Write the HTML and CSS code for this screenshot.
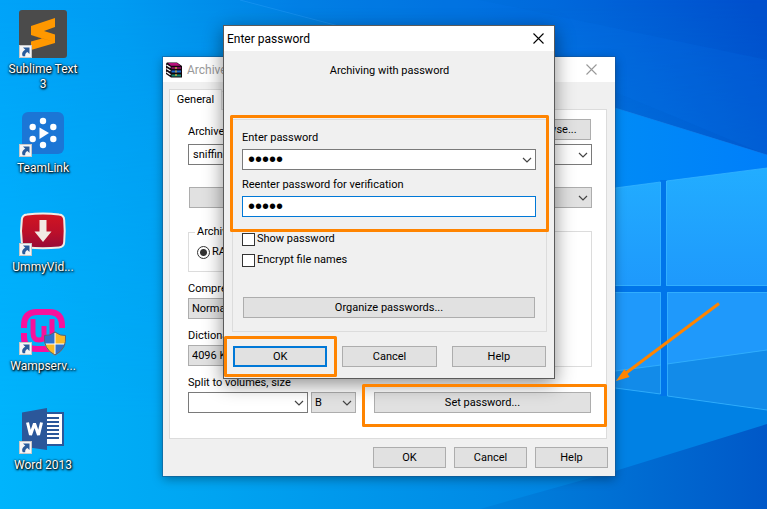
FILE: index.html
```html
<!DOCTYPE html>
<html lang="en">
<head>
<meta charset="utf-8">
<meta name="viewport" content="width=device-width, initial-scale=1">
<title>Enter password</title>
<link rel="stylesheet" href="styles.css">
</head>
<body>
<svg class="defs" width="0" height="0" aria-hidden="true">
  <symbol id="chevron" viewBox="0 0 10 6"><path d="M1 1l4 4 4-4" fill="none" stroke="#444" stroke-width="1.2"/></symbol>
  <symbol id="close" viewBox="0 0 11 11"><path d="M.5.5l10 10M10.5.5l-10 10" fill="none" stroke="currentColor" stroke-width="1.1"/></symbol>
  <symbol id="shortcut" viewBox="0 0 13 13">
    <rect x=".5" y=".5" width="12" height="12" fill="#f6f6f6" stroke="#c9c9c9"/>
    <path d="M4 2.5h6.5V9L8.400 6.900C6.600 8 6 9 6.200 11.200H3.800C2.400 8.600 3.500 6.200 6.300 4.800z" fill="#2a5c9c"/>
  </symbol>
</svg>

<main class="desktop">
  <svg class="wallpaper" viewBox="0 0 767 509" preserveAspectRatio="xMidYMid slice" aria-hidden="true">
    <defs>
      <linearGradient id="sky" x1="0" y1=".3" x2="1" y2=".1">
        <stop offset="0" stop-color="#00a6fb"/><stop offset=".2" stop-color="#009cf2"/><stop offset=".45" stop-color="#007fe2"/><stop offset=".75" stop-color="#0069dc"/><stop offset="1" stop-color="#0050cd"/>
      </linearGradient>
      <linearGradient id="floor" x1="0" y1="0" x2="1" y2="0">
        <stop offset="0" stop-color="#00b4fc"/><stop offset=".25" stop-color="#00a6f2"/><stop offset=".8" stop-color="#007fe0"/><stop offset="1" stop-color="#0066d2"/>
      </linearGradient>
      <linearGradient id="fade" x1="0" y1="0" x2="0" y2="1">
        <stop offset="0" stop-color="#fff" stop-opacity="0"/><stop offset=".85" stop-color="#fff"/>
      </linearGradient>
      <mask id="low"><rect width="767" height="509" fill="url(#fade)"/></mask>
      <linearGradient id="pane" x1="0" y1="0" x2="0" y2="1"><stop offset="0" stop-color="#22adff"/><stop offset="1" stop-color="#1e99fc"/></linearGradient>
      <linearGradient id="beam" x1="0" y1="0" x2="1" y2="0"><stop offset="0" stop-color="#008ff5"/><stop offset="1" stop-color="#007ffa"/></linearGradient>
      <linearGradient id="corner" x1="0" y1="0" x2="1" y2="0"><stop offset="0" stop-color="#0084de"/><stop offset="1" stop-color="#0058c8"/></linearGradient>
    </defs>
    <rect width="767" height="509" fill="url(#sky)"/>
    <rect width="767" height="509" fill="url(#floor)" mask="url(#low)"/>
    <path d="M240 0L335 25L500 72L615 92L767 155V60L480 0z" fill="#0a7cf0" opacity=".15"/>
    <path d="M240 0L335 25L615 108L767 155" fill="none" stroke="#3aa8ff" opacity=".3"/>
    <path d="M560 92L615 108L767 155V290H560z" fill="url(#beam)"/>
    <path d="M560 286H767V430L615 474H560z" fill="#0081e4"/>
    <path d="M480 509L615 471L767 424V509z" fill="url(#corner)"/>
    <path d="M600 284H767V293H600zM660 180H667V396H660z" fill="#0075ea"/>
    <path d="M600 190L661 182V286H600zM666 181L767 168V286H666z" fill="url(#pane)"/>
    <path d="M600 292H661V394L600 386zM667 292H767V410L667 396z" fill="#1f99fb"/>
    <path d="M600 373L661 365V394L600 386zM667 364L767 350V410L667 396z" fill="#128be9"/>
    <path d="M600 190L660.500 182V285.500H600M767 168L666.500 181V285.500H767M600 292.500H660.500V394L600 386M767 292.500H667.500V396L767 410M600 373L661 365M667 364L767 350" fill="none" stroke="#38b6ff" opacity=".75"/>
  </svg>

  <nav class="shortcuts" aria-label="Desktop">
    <a class="shortcut" href="#sublime">
      <svg class="glyph" viewBox="0 0 48 48" aria-hidden="true">
        <rect width="48" height="48" rx="3" fill="#4b4b4b"/>
        <path d="M12 16L36 8V17L25 21L36 24.500V33L12 40V31.500L23 28.500L12 25z" fill="#ff9800"/>
        <path d="M12 25L36 32L23 28.500z" fill="#d87c00"/>
        <use href="#shortcut" y="35" width="13" height="13"/>
      </svg>
      <span>Sublime Text 3</span>
    </a>
    <a class="shortcut" href="#teamlink">
      <svg class="glyph" viewBox="0 0 48 48" aria-hidden="true">
        <rect x="3" y="3" width="42" height="42" rx="6" fill="#1b76d6"/>
        <g fill="#fff"><circle cx="24" cy="12" r="3.200"/><circle cx="34.300" cy="18" r="3.200"/><circle cx="34.300" cy="30" r="3.200"/><circle cx="24" cy="36" r="3.200"/><circle cx="13.700" cy="30" r="3.200"/><circle cx="13.700" cy="18" r="3.200"/><path d="M20.500 18.500L30 24L20.500 30z"/></g>
        <use href="#shortcut" y="35" width="13" height="13"/>
      </svg>
      <span>TeamLink</span>
    </a>
    <a class="shortcut" href="#ummy">
      <svg class="glyph" viewBox="0 0 48 48" aria-hidden="true">
        <defs><linearGradient id="ruby" x1="0" y1="0" x2="0" y2="1"><stop offset="0" stop-color="#d21522"/><stop offset=".55" stop-color="#bb0f2a"/><stop offset="1" stop-color="#960c38"/></linearGradient></defs>
        <path d="M8 6.500Q24 4.500 40 6.500Q45 7 45.200 12Q46.200 23 45.200 34Q45 39 40 39.500Q24 41 8 39.500Q3 39 2.800 34Q1.200 23 2.800 12Q3 7 8 6.500z" fill="url(#ruby)" stroke="#f1ece6" stroke-width="2"/>
        <path d="M20.500 12H27.500V23.500H32.500L24 34L15.500 23.500H20.500z" fill="#f2eae4"/>
        <use href="#shortcut" y="35" width="13" height="13"/>
      </svg>
      <span>UmmyVid...</span>
    </a>
    <a class="shortcut" href="#wamp">
      <svg class="glyph" viewBox="0 0 48 48" aria-hidden="true">
        <g fill="none" stroke="#f8109c" stroke-width="6">
          <path d="M5 21V19Q5 5 18 5H30Q43 5 43 19V21M5 26V30Q5 42 18 42H32"/>
          <path d="M14 12V26Q14 33 20 33Q25 33 25 29V19M25 29Q25 33 29 33Q33 33 33 26V12" stroke-width="5"/>
        </g>
        <path d="M36 25Q31 29 25.500 28.500Q24 42 36 48.500z" fill="#2f72cc"/><path d="M36 25Q41 29 46.500 28.500Q48 42 36 48.500z" fill="#f8b828"/>
        <path d="M25.500 37H36V48.500Q28 44 25.500 37z" fill="#f8b828"/><path d="M36 37H46.500Q44 44 36 48.500z" fill="#2f72cc"/>
        <path d="M36 26V47M26 37H46" stroke="#fff" stroke-width="1"/>
        <path d="M36 25Q31 29 25.500 28.500Q24 42 36 48Q48 42 46.500 28.500Q41 29 36 25z" fill="none" stroke="#596574"/>
        <use href="#shortcut" y="35" width="13" height="13"/>
      </svg>
      <span>Wampserv...</span>
    </a>
    <a class="shortcut" href="#word">
      <svg class="glyph" viewBox="0 0 48 48" aria-hidden="true">
        <path d="M24 7H44V39H24z" fill="#fff" stroke="#2b579a" stroke-width="2"/>
        <path d="M28 12H40M28 16H40M28 20H40M28 24H40M28 28H40M28 32H40" stroke="#2b579a" stroke-width="2"/>
        <path d="M3 6.500L28 2V44L3 40.500z" fill="#2b579a"/>
        <path d="M8.500 16.500L11.500 29L15.500 17.500L19.500 29L22.500 16.500" fill="none" stroke="#fff" stroke-width="3" stroke-linejoin="bevel"/>
        <use href="#shortcut" y="35" width="13" height="13"/>
      </svg>
      <span>Word 2013</span>
    </a>
  </nav>

  <section class="window archive" aria-label="Archive settings">
    <header class="titlebar">
      <svg class="books" viewBox="0 0 16 16" aria-hidden="true">
        <path d="M1 .5H11L16 4V15.500H5L0 12V1.500z" fill="#14080e"/>
        <path d="M2 1H11L14.500 3.800H5z" fill="#b8107c"/>
        <path d="M5.500 6H15" stroke="#a01070" stroke-width="1.500"/>
        <path d="M5.500 9.500H15" stroke="#1a6ad0" stroke-width="2"/>
        <path d="M5.500 13.500H15" stroke="#108a70" stroke-width="2"/>
        <path d="M.5 3L4.500 5.500M.5 6.500L4.500 9M.5 10L4.500 12.800" stroke="#fff" stroke-width="1.300"/>
        <path d="M10 5V15" stroke="#c8a83c" stroke-width="1.500" stroke-dasharray="2 1.500"/>
      </svg>
      <h2>Archive</h2>
      <button class="close" aria-label="Close"><svg viewBox="0 0 11 11"><use href="#close"/></svg></button>
    </header>
    <div class="archive-body">
      <div class="tabs"><button class="tab active">General</button><button class="tab" aria-label="Advanced"></button></div>
      <form class="page">
        <div class="row name-row">
          <label for="name">Archive</label>
          <button type="button" class="btn browse">Browse...</button>
        </div>
        <div class="combo light">
          <input id="name" value="sniffing">
          <svg class="chev" aria-hidden="true"><use href="#chevron"/></svg>
        </div>
        <div class="row profile-row">
          <button type="button" class="btn profiles" aria-label="Profiles"></button>
          <div class="combo"><select aria-label="Update mode"></select><svg class="chev" aria-hidden="true"><use href="#chevron"/></svg></div>
        </div>
        <div class="columns">
          <div class="left">
            <fieldset class="format">
              <legend>Archive</legend>
              <label class="option"><input type="radio" checked>RAR</label>
            </fieldset>
            <div class="field">
              <label for="method">Compression</label>
              <div class="combo"><select id="method"><option>Normal</option></select></div>
            </div>
            <div class="field">
              <label for="dict">Dictionary</label>
              <div class="combo"><select id="dict"><option>4096 KB</option></select></div>
            </div>
            <div class="field">
              <label for="split">Split to volumes, size</label>
              <div class="row split">
                <div class="combo light"><input id="split"><svg class="chev" aria-hidden="true"><use href="#chevron"/></svg></div>
                <div class="combo unit"><select aria-label="Unit"><option>B</option></select><svg class="chev" aria-hidden="true"><use href="#chevron"/></svg></div>
              </div>
            </div>
          </div>
          <div class="right">
            <fieldset class="options"></fieldset>
            <button type="button" class="btn">Set password...</button>
          </div>
        </div>
      </form>
      <footer class="actions"><button class="btn">OK</button><button class="btn">Cancel</button><button class="btn">Help</button></footer>
    </div>
  </section>

  <section class="window password" role="dialog" aria-labelledby="pw-title">
    <header class="titlebar">
      <h1 id="pw-title">Enter password</h1>
      <button class="close" aria-label="Close"><svg viewBox="0 0 11 11"><use href="#close"/></svg></button>
    </header>
    <form class="password-body">
      <p class="lead">Archiving with password</p>
      <div class="group">
        <div class="field">
          <label for="pw">Enter password</label>
          <div class="combo light"><input id="pw" type="password" value="12345"><svg class="chev" aria-hidden="true"><use href="#chevron"/></svg></div>
        </div>
        <div class="field">
          <label for="pw2">Reenter password for verification</label>
          <div class="combo focused"><input id="pw2" type="password" value="12345"></div>
        </div>
        <div class="checks">
          <label class="option"><input type="checkbox">Show password</label>
          <label class="option"><input type="checkbox">Encrypt file names</label>
        </div>
        <button type="button" class="btn organize">Organize passwords...</button>
      </div>
      <footer class="actions"><button type="button" class="btn default">OK</button><button type="button" class="btn">Cancel</button><button type="button" class="btn">Help</button></footer>
    </form>
  </section>

  <svg class="callouts" width="767" height="509" viewBox="0 0 767 509" aria-hidden="true">
    <g fill="none" stroke="#ff8400" stroke-width="3" stroke-linejoin="round">
      <rect x="231.500" y="116.500" width="316" height="114"/>
      <rect x="225.500" y="337.500" width="110" height="38"/>
      <rect x="363.500" y="385.500" width="242" height="40"/>
      <path d="M719 303.500L626 373"/>
    </g>
    <path d="M616 381L624.500 369L629.500 377z" fill="#ff8400"/>
  </svg>
</main>
</body>
</html>
```
FILE: styles.css
```css
* { box-sizing: border-box; }

body {
  margin: 0;
  font: 11px/16px Roboto, "Open Sans", sans-serif;
  color: #000;
}

button, input, select { font: inherit; color: inherit; margin: 0; }
h1, h2, p { margin: 0; font-size: 12px; font-weight: 400; }
.defs { position: absolute; }

.desktop {
  position: relative;
  min-height: 100vh;
  overflow: hidden;
  background: #008fea;
}

.wallpaper { position: absolute; inset: 0; width: 100%; height: 100%; }

/* Desktop shortcuts */
.shortcuts {
  position: relative;
  display: grid;
  grid-auto-rows: 99px;
  width: 86px;
  padding-top: 10px;
}

.shortcut {
  display: flex;
  flex-direction: column;
  align-items: center;
  gap: 4px;
  padding: 0 6px;
  font-size: 12px;
  line-height: 15px;
  text-align: center;
  text-decoration: none;
  color: #fff;
  text-shadow: 0 0 2px #000, 1px 1px 2px #000, 0 1px 3px rgba(0, 0, 0, .6);
}

.glyph { width: 48px; height: 48px; flex: none; overflow: visible; }

/* Windows */
.window { position: absolute; background: #f0f0f0; }

.archive {
  left: 163px;
  top: 57px;
  width: 452px;
  box-shadow: 0 0 0 1px rgba(30, 80, 130, .45), 0 3px 10px rgba(0, 0, 0, .35);
}

.password {
  left: 223px;
  top: 25px;
  width: 332px;
  border: 1px solid #5a5a5a;
  box-shadow: 0 5px 18px rgba(0, 0, 0, .45);
}

.titlebar {
  display: flex;
  align-items: center;
  gap: 5px;
  height: 25px;
  padding: 0 3px;
  background: #fff;
}

.archive .titlebar { color: #999; }
.books { width: 16px; height: 16px; }
.close {
  display: grid;
  place-items: center;
  width: 25px;
  height: 25px;
  margin-left: auto;
  padding: 0;
  border: 0;
  background: none;
}
.close svg { width: 11px; height: 11px; overflow: visible; }
.archive .close { margin-right: 8px; }

/* Controls */
.btn {
  height: 21px;
  padding: 0;
  border: 1px solid #adadad;
  background: #e1e1e1;
  line-height: 16px;
}
.btn.default { border: 2px solid #0078d7; }

.combo {
  display: grid;
  align-items: center;
  height: 21px;
  border: 1px solid #adadad;
  background: #e1e1e1;
}
.combo > * { grid-area: 1 / 1; }
.combo.light { border-color: #7a7a7a; background: #fff; }
.combo.focused { border-color: #0078d7; background: #fff; }
.combo input, .combo select {
  width: 100%;
  min-width: 0;
  height: 19px;
  padding: 0 3px;
  border: 0;
  outline: 0;
  background: none;
  appearance: none;
}
.combo.light input { padding: 0 4px; }
.combo input[type="password"] { padding: 0 5px; font: 20px/16px "Liberation Sans", sans-serif; }
.chev { width: 10px; height: 6px; margin-right: 3px; justify-self: end; pointer-events: none; }

.row { display: flex; }
.field { display: grid; gap: 1px; }

.option { display: flex; align-items: center; gap: 2px; }
.option input {
  width: 13px;
  height: 13px;
  border: 1px solid #333;
  background: #fff;
  appearance: none;
}
.option input[type="radio"] {
  border-radius: 50%;
  background: radial-gradient(circle, #333 3px, #fff 4px);
}

/* Archive window */
.archive-body { padding: 7px 7px 8px 6px; }
.tabs { display: flex; height: 20px; }
.tab {
  width: 53px;
  padding: 0;
  border: 1px solid #dcdcdc;
  border-bottom: 0;
  background: #f0f0f0;
}
.tab.active { height: 21px; background: #fff; position: relative; }
.tab:not(.active) { margin-top: 2px; border-left: 0; }

.page {
  margin-right: 1px;
  padding: 9px 14px 25px 18px;
  border: 1px solid #dcdcdc;
  background: #fff;
}
.name-row { justify-content: space-between; align-items: flex-end; margin-bottom: 4px; }
.browse { width: 74px; margin-right: 1px; }
.profile-row { display: grid; grid-template-columns: 1fr 1fr; gap: 16px; margin: 22px 0 16px; }
.profiles { margin-left: 1px; }

.columns { display: grid; grid-template-columns: 168px 1fr; gap: 18px; }
.left { display: grid; gap: 9px; }
fieldset { margin: 0; border: 1px solid #dcdcdc; min-width: 0; }
.format { height: 48px; padding: 4px 8px; }
.format legend { padding: 0 2px; margin-left: -2px; }
.split { gap: 3px; }
.split .light { flex: 1; }
.unit { width: 45px; }
.right { display: flex; flex-direction: column; justify-content: space-between; padding-top: 7px; }
.options { height: 136px; }
.right .btn { margin-right: 1px; }

.actions { display: grid; grid-template-columns: repeat(3, 1fr); }
.archive .actions { gap: 8px; margin: 8px 0 0 204px; }

/* Password dialog */
.password-body { padding: 12px 7px 11px 8px; }
.lead { font-size: 11px; text-align: center; }
.group {
  display: grid;
  gap: 7px;
  margin-top: 40px;
  padding: 10px 10px 13px 9px;
  border: 1px solid #dcdcdc;
}
.group .field { gap: 3px; }
.checks { display: grid; gap: 5px; margin-top: 7px; }
.organize { margin: 22px 1px 0; }
.password .actions { gap: 15px; margin: 14px 1px 0; }

.callouts { position: absolute; left: 0; top: 0; pointer-events: none; }
```
